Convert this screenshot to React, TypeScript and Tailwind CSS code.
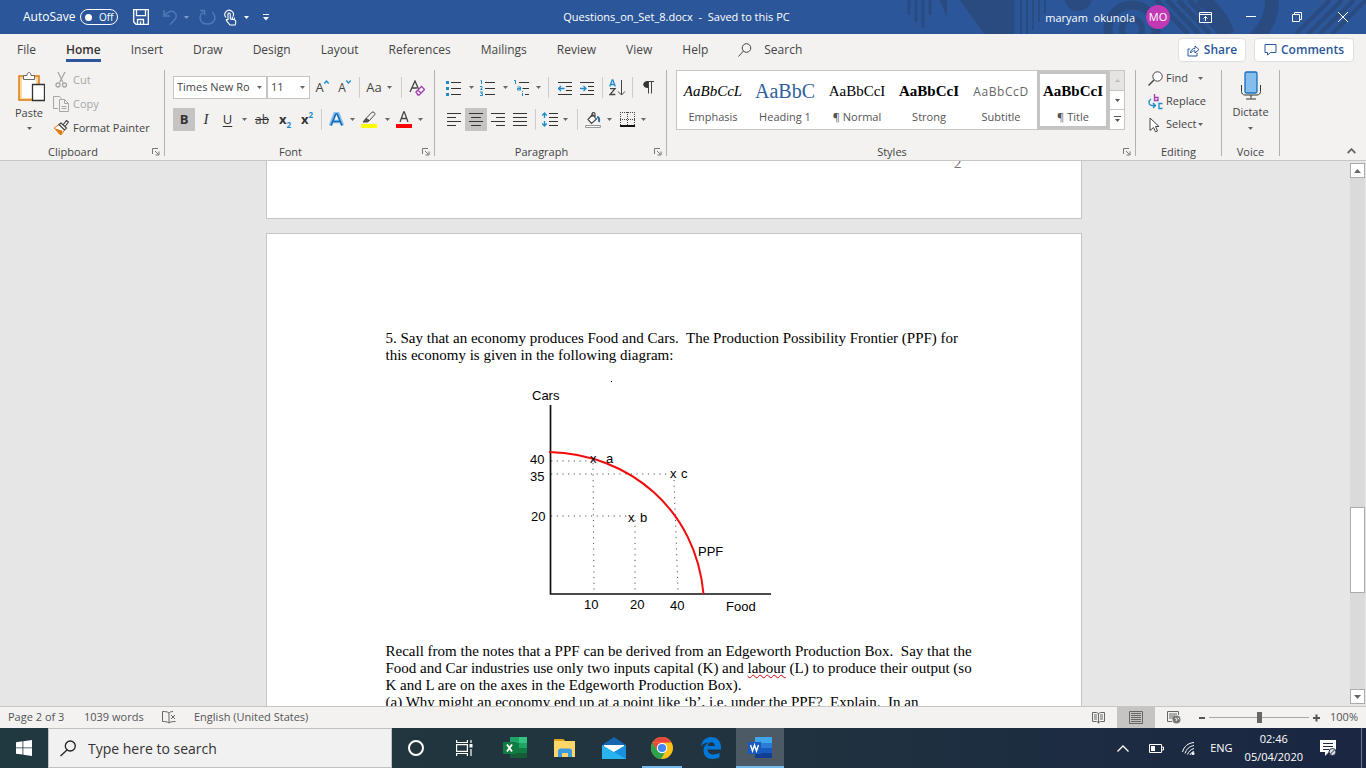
import React from "react";

const INK = "#444444";
const BLUE = "#1e8bcd";

function Caret({ w = "w-2", label, light = false }: { w?: string; label: string; light?: boolean }) {
  return (
    <button aria-label={label} className={`flex h-full shrink-0 items-center justify-center ${w}`}>
      <svg width="5" height="3" viewBox="0 0 5 3" aria-hidden="true">
        <path d="M0 0h5L2.500 3z" fill={light ? "#fff" : "#666"} />
      </svg>
    </button>
  );
}

function Tool({ label, w, on = false, children }: { label: string; w: string; on?: boolean; children: React.ReactNode }) {
  return (
    <button
      aria-label={label}
      title={label}
      className={`flex h-full shrink-0 items-center justify-center ${w} ${on ? "bg-[#c6c4c2]" : ""}`}
    >
      {children}
    </button>
  );
}

function Divider({ w }: { w: string }) {
  return (
    <div className={`flex h-full shrink-0 justify-center py-px ${w}`}>
      <div className="w-px bg-[#cfcdcb]" />
    </div>
  );
}

function Svg({ w = 16, h = 16, children }: { w?: number; h?: number; children: React.ReactNode }) {
  return (
    <svg width={w} height={h} viewBox={`0 0 ${w} ${h}`} fill="none" stroke={INK} aria-hidden="true" className="shrink-0">
      {children}
    </svg>
  );
}

function Group({ name, className, launcher = false, children }: { name: string; className: string; launcher?: boolean; children: React.ReactNode }) {
  return (
    <section aria-label={name} className={`flex shrink-0 flex-col ${className}`}>
      <div className="flex-1">{children}</div>
      <div className={`relative flex h-4 items-center justify-center text-[11px] ${launcher ? "pr-[18px]" : ""}`}>
        {name}
        {launcher && (
          <button aria-label={`${name} settings`} className="absolute right-1 top-1">
            <Svg w={8} h={8}>
              <path d="M.5 6V.5H6M3 3l3.500 3.500M7 3.500V7H3.500" stroke="#777" />
            </Svg>
          </button>
        )}
      </div>
    </section>
  );
}

function GroupLine() {
  return <div className="mb-1 mt-1 w-px shrink-0 self-stretch bg-[#b3b0ad]" />;
}

function Lines({ rows }: { rows: number[][] }) {
  return (
    <Svg w={14} h={14}>
      {rows.map(([a, b], i) => (
        <path key={i} d={`M${a} ${i * 4 + 0.5}H${b}`} stroke="#333" />
      ))}
    </Svg>
  );
}

function StyleCard({ name, sample, preview, on = false }: { name: string; sample: string; preview: string; on?: boolean }) {
  return (
    <button className={`flex w-[72px] shrink-0 flex-col items-center border-[3px] ${on ? "border-[#c6c4c2]" : "border-transparent"}`}>
      <span className={`h-[35px] shrink-0 whitespace-nowrap leading-[35px] ${preview}`}>{sample}</span>
      <span className="whitespace-nowrap text-[11px] leading-[15px] text-[#555]">{name}</span>
    </button>
  );
}

function TitleArt() {
  return (
    <svg className="absolute right-0 top-0 h-full" width="460" height="34" viewBox="906 0 460 34" fill="none" stroke="#2a4b80" aria-hidden="true">
      <g strokeWidth="3">
        <path d="M909 0v15M916 0v22M923 0v28M930 0v15" />
      </g>
      <path d="M940 0l7 18V0zM960 0l24 34h14V0z" fill="#2a4b80" stroke="none" />
      <path d="M1006 0v34" strokeWidth="17" />
      <path d="M1021 0v34M1027 0v34M1033 0v30M1039 0v22M1045 0v14" strokeWidth="2" />
      <circle cx="1078" cy="-3" r="14" fill="#2a4b80" stroke="none" />
      <circle cx="1132" cy="29" r="24" strokeWidth="9" />
      <circle cx="1132" cy="29" r="10" strokeWidth="6" />
      <path d="M1156 0l32 34M1167 0l32 34M1178 0l32 34M1189 0l32 34" strokeWidth="5" />
      <path d="M1272 0c0 16-7 30-19 40M1200-2c12 8 22 20 28 36" strokeWidth="14" />
      <path d="M1330 0l-34 34M1342 0l-34 34M1354 0l-34 34M1366 0l-34 34" strokeWidth="4" />
    </svg>
  );
}

function TitleBar() {
  return (
    <header className="relative flex h-[34px] shrink-0 items-center bg-[#2b579a] text-[11px] text-white">
      <TitleArt />
      <div className="relative flex h-full flex-1 items-center pl-[23px]">
        <span id="autosave" className="w-[57px] text-[12px]">AutoSave</span>
        <button role="switch" aria-checked="false" aria-labelledby="autosave" className="flex h-4 w-[38px] items-center gap-[7px] rounded-full border border-white pl-1 text-[10px]">
          <span className="size-[7px] rounded-full bg-white" />Off
        </button>
        <button aria-label="Save" className="ml-[15px]">
          <svg width="16" height="16" fill="none" stroke="#fff" strokeWidth="1.300"><path d="M.7.7h14.600v14.600H3L.7 13zM3.500.7v6h9v-6M4.500 15v-4.500h6V15M7.500 12.500V15" /></svg>
        </button>
        <button aria-label="Undo" className="ml-[14px]">
          <svg width="15" height="16" fill="none" stroke="#5279b5" strokeWidth="1.500"><path d="M1 1v6h6M1.500 6.500C5 2 9 1.500 11.500 3.500c3 2.500 2 5.500-.5 8L7 15.500" /></svg>
        </button>
        <div className="ml-1 opacity-40"><Caret light w="w-[9px]" label="Undo history" /></div>
        <button aria-label="Repeat" className="ml-2">
          <svg width="17" height="16" fill="none" stroke="#5279b5" strokeWidth="1.500"><path d="M4 3C-1 7 .5 15 8.500 15s9.500-8 4.500-12M1 1.500h4.500V6" /></svg>
        </button>
        <button aria-label="Touch mode" className="ml-2">
          <svg width="14" height="17" fill="none" stroke="#fff" strokeWidth="1.100"><path d="M2 8.500A4.300 4.300 0 1 1 9 7.500M4 11V5.200c0-1.700 2.300-1.700 2.300 0V10l4 .7c1.300.3 1.700 1 1.500 2.300l-.6 3H6l-3.500-4.300c-.7-1 .5-1.700 1.500-.7M8.300 10V7.800M10.300 10.500V8.500" /></svg>
        </button>
        <div className="ml-1 flex items-center"><Caret light w="w-[9px]" label="Touch mode options" /></div>
        <button aria-label="Customize toolbar" className="ml-3">
          <svg width="6" height="7"><path d="M0 .5h6" stroke="#fff" /><path d="M0 3h6L3 6.500z" fill="#fff" /></svg>
        </button>
      </div>
      <h1 className="relative whitespace-pre pr-9 text-[11px]">Questions_on_Set_8.docx  -  Saved to this PC</h1>
      <div className="relative flex h-full flex-1 items-center justify-end">
        <span className="whitespace-pre pr-[11px] pt-[2px] text-[11px]">maryam  okunola</span>
        <span className="mr-3 flex size-6 items-center justify-center rounded-full bg-[#c239b3] text-[11px]">MO</span>
        <button aria-label="Ribbon display options" className="flex w-[46px] justify-center"><svg width="13" height="11" fill="none" stroke="#fff"><path d="M.5.5h12v10H.5zM.5 2.500h12M6.500 9V4.500M4.500 6.500l2-2 2 2" /></svg></button>
        <button aria-label="Minimize" className="flex w-[46px] justify-center"><svg width="10" height="2"><path d="M0 .5h10" stroke="#fff" /></svg></button>
        <button aria-label="Restore" className="flex w-[46px] justify-center"><svg width="10" height="10" fill="none" stroke="#fff"><path d="M.5 2.500h7v7h-7zM2.500 2.500v-2h7v7h-2" /></svg></button>
        <button aria-label="Close" className="flex w-[46px] justify-center"><svg width="10" height="10" fill="none" stroke="#fff"><path d="M0 0l10 10M10 0L0 10" /></svg></button>
      </div>
    </header>
  );
}

const tabs = ["File", "Home", "Insert", "Draw", "Design", "Layout", "References", "Mailings", "Review", "View", "Help"];

function Tabs() {
  return (
    <nav className="flex h-8 shrink-0 items-center justify-between pl-[17px] pr-3 text-[12px]">
      <div className="flex h-full items-center gap-[30px]">
        {tabs.map((t) =>
          t === "Home" ? (
            <button key={t} className="relative h-full font-semibold text-[#333]">
              {t}
              <span className="absolute inset-x-0 bottom-1 h-[3px] bg-[#2b579a]" />
            </button>
          ) : (
            <button key={t}>{t}</button>
          )
        )}
        <button className="flex items-center gap-3">
          <Svg w={14} h={14}><circle cx="8.500" cy="5" r="4.300" /><path d="M5.500 8L.5 13.500" /></Svg>
          Search
        </button>
      </div>
      <div className="flex gap-2 font-semibold text-[#2b579a]">
        <button className="flex h-6 w-[68px] items-center justify-center gap-1 rounded-sm border border-[#e1dfdd] bg-white">
          <svg width="13" height="13" fill="none" stroke="#2b579a"><path d="M3 5H1v7h9V9M3.500 9c0-3 2-4.500 4.500-4.500V2L12 5.500 8 9V6.800C6 6.800 4.500 7.500 3.500 9z" /></svg>
          Share
        </button>
        <button className="flex h-6 w-[100px] items-center justify-center gap-1 rounded-sm border border-[#e1dfdd] bg-white">
          <svg width="13" height="12" fill="none" stroke="#2b579a"><path d="M1 .5h11v8H6.500L3.500 11V8.500H1z" /></svg>
          Comments
        </button>
      </div>
    </nav>
  );
}

function Clipboard() {
  return (
    <Group name="Clipboard" className="w-[164px]" launcher>
      <div className="flex">
        <button className="ml-[13px] flex w-8 flex-col items-center pt-[5px] text-[11px]">
          <svg width="28" height="31" fill="none" aria-hidden="true" className="ml-1">
            <path d="M2 5h20v24H2z" fill="#fbd79b" stroke="#e07a12" strokeWidth="1.500" />
            <path d="M5 8h14v19H5z" fill="#fff" />
            <path d="M6.500 8.500v-4h3.500c0-4 4-4 4 0h3.500v4z" fill="#fff" stroke="#666" />
            <path d="M15.500 13.500h12v16h-12z" fill="#fff" stroke="#333" strokeWidth="1.300" />
          </svg>
          <span className="mt-[3px] leading-[15px]">Paste</span>
          <svg className="mt-[7px]" width="5" height="3"><path d="M0 0h5L2.500 3z" fill="#666" /></svg>
        </button>
        <div className="flex flex-col pl-2 pt-[2px] text-[11px]">
          <button className="flex h-6 items-center gap-1 text-[#a6a6a6]">
            <Svg w={16} h={16}>
              <g stroke="#a6a6a6" strokeWidth="1.300"><path d="M5 0l5 10.500M12 0L6.500 10.500" /><circle cx="5" cy="13" r="2" /><circle cx="11.500" cy="13" r="2" /></g>
            </Svg>
            Cut
          </button>
          <button className="flex h-6 items-center gap-1 text-[#a6a6a6]">
            <Svg w={16} h={16}>
              <g stroke="#a6a6a6"><path d="M5 12.500H.5V.5h6l2 2M6.500 3.500h5l4 4v8h-9zM11.500 3.500v4h4M8.500 10.500h5M8.500 12.500h5" /></g>
            </Svg>
            Copy
          </button>
          <button className="flex h-6 items-center gap-1 whitespace-nowrap">
            <Svg w={16} h={16}>
              <path d="M1 8l5-3.500 5.500 5.500L8 15z" fill="#fff" stroke="#e07a12" />
              <path d="M2 9l7 2-1.500 4z" fill="#e07a12" stroke="#e07a12" />
              <path d="M6 4.500l2-1.500 5.500 5-2 2zM10 5l3.500-4.500L15.500 2 12 6.500" stroke="#444" fill="#fff" strokeWidth="1.200" />
            </Svg>
            Format Painter
          </button>
        </div>
      </div>
    </Group>
  );
}

function FontSelect({ label, value, w }: { label: string; value: string; w: string }) {
  return (
    <div className={`relative h-[23px] shrink-0 ${w}`}>
      <select aria-label={label} className="block h-[23px] w-full appearance-none border border-[#c6c4c2] bg-white pl-[3px] text-[11px] text-[#444]">
        <option>{value}</option>
      </select>
      <svg className="pointer-events-none absolute right-[5px] top-[10px]" width="5" height="3"><path d="M0 0h5L2.500 3z" fill="#666" /></svg>
    </div>
  );
}

function FontGroup() {
  return (
    <Group name="Font" className="w-[269px]" launcher>
      <div className="flex flex-col gap-[9px] pl-2 pt-[10px]">
        <div className="flex h-[23px] items-center">
          <FontSelect label="Font name" value="Times New Ro" w="w-[94px]" />
          <FontSelect label="Font size" value="11" w="w-[43px]" />
          <Tool label="Grow font" w="w-6">
            <span className="text-[13px]">A</span><svg className="mb-3" width="5" height="4" fill="none" stroke={BLUE}><path d="M.3 3.500L2.500 1l2.200 2.500" strokeWidth="1.300" /></svg>
          </Tool>
          <Tool label="Shrink font" w="w-[21px]">
            <span className="text-[12px]">A</span><svg className="mb-3" width="5" height="4" fill="none" stroke={BLUE}><path d="M.3.500L2.500 3 4.700.500" strokeWidth="1.300" /></svg>
          </Tool>
          <Divider w="w-2" />
          <Tool label="Change case" w="w-[22px]"><span className="text-[13px]">Aa</span></Tool>
          <Caret label="Case options" />
          <Divider w="w-4" />
          <Tool label="Clear formatting" w="w-4">
            <Svg><path d="M1 12L6 1l3.500 8M3 8h5" strokeWidth="1.300" /><path d="M7 12l5.500-5.500 3 3L10 15H9zM8.800 10l3.200 3" stroke="#a33eb0" strokeWidth="1.400" fill="#fff" /></Svg>
          </Tool>
        </div>
        <div className="flex h-[23px] items-center text-[#333]">
          <Tool label="Bold" w="w-[22px]" on><span className="text-[13px] font-bold">B</span></Tool>
          <Tool label="Italic" w="w-[22px]"><span className="font-['Liberation_Serif',serif] text-[15px] italic">I</span></Tool>
          <Tool label="Underline" w="w-[21px]"><span className="text-[13px] underline underline-offset-2">U</span></Tool>
          <Caret label="Underline options" w="w-[13px]" />
          <Tool label="Strikethrough" w="w-[22px]"><span className="text-[12px] line-through">ab</span></Tool>
          <Tool label="Subscript" w="w-6"><span className="text-[13px] font-bold">x</span><span className="mt-[10px] text-[8px] font-bold text-[#1e8bcd]">2</span></Tool>
          <Tool label="Superscript" w="w-5"><span className="text-[13px] font-bold">x</span><span className="mb-[10px] text-[8px] font-bold text-[#1e8bcd]">2</span></Tool>
          <Divider w="w-2" />
          <Tool label="Text effects" w="w-[23px]">
            <Svg w={15} h={15}><path d="M1.500 13.500L6 1.500h3l4.500 12M3.500 9.500h8" stroke="#8cc4ec" strokeWidth="3.500" /><path d="M2 13.500L6.700 2h1.600L13 13.500M4 9.500h7" stroke="#1a6dbb" strokeWidth="1.700" /></Svg>
          </Tool>
          <Caret label="Text effect options" />
          <Tool label="Highlight" w="w-[26px]">
            <Svg w={16} h={17}><path d="M0 13h16v4H0z" fill="#ff0" stroke="none" /><path d="M5 7.500L11 1.200c1-1 3.700.8 2.800 2.300L8.500 9.500H5z" /><path d="M5 7.500L2 11h4.500l2-1.500z" fill="#555" /></Svg>
          </Tool>
          <Caret label="Highlight colours" w="w-[10px]" />
          <Tool label="Font colour" w="w-6">
            <Svg w={16} h={17}><path d="M0 13h16v4H0z" fill="#f00" stroke="none" /><path d="M4 11L7.700.8h.6L12 11M5.500 7.500h5" strokeWidth="1.300" /></Svg>
          </Tool>
          <Caret label="Font colours" />
        </div>
      </div>
    </Group>
  );
}

function ParagraphGroup() {
  return (
    <Group name="Paragraph" className="w-[231px]" launcher>
      <div className="flex flex-col gap-[9px] pt-[10px]">
        <div className="flex h-[23px] pl-[7px]">
          <Tool label="Bullets" w="w-6">
            <Svg><path d="M0 1h3v3H0zM0 7h3v3H0zM0 13h3v3H0z" fill={BLUE} stroke="none" /><path d="M5 2.500h10M5 8.500h10M5 14.500h10" stroke="#333" /></Svg>
          </Tool>
          <Caret label="Bullet options" w="w-[10px]" />
          <Tool label="Numbering" w="w-6">
            <Svg><path d="M.5.500h1V4M0 6.500h2v1.300L.5 9.500h2M0 12h2.500L1 13.700h1.500v1.800H0" stroke={BLUE} /><path d="M5 2.500h10M5 8.500h10M5 14.500h10" stroke="#333" /></Svg>
          </Tool>
          <Caret label="Numbering options" w="w-[10px]" />
          <Tool label="Multilevel list" w="w-6">
            <Svg><path d="M0 .500h1.500V4M3.500 7h3v3h-3V8.500h3M8.500 11v1M8.500 13v3" stroke={BLUE} /><path d="M5 2.500h10M8.500 8.500H15M11 14.500h4" stroke="#333" /></Svg>
          </Tool>
          <Caret label="Multilevel options" />
          <Divider w="w-3" />
          <Tool label="Decrease indent" w="w-[22px]">
            <Svg w={14} h={14}><path d="M0 1.500h14M8 5.500h6M8 9.500h6M0 13.500h14" stroke="#333" /><path d="M6.500 7.500h-6M3 5L.5 7.500 3 10" stroke={BLUE} strokeWidth="1.300" /></Svg>
          </Tool>
          <Tool label="Increase indent" w="w-[22px]">
            <Svg w={14} h={14}><path d="M0 1.500h14M8 5.500h6M8 9.500h6M0 13.500h14" stroke="#333" /><path d="M0 7.500h6M3.500 5L6 7.500 3.500 10" stroke={BLUE} strokeWidth="1.300" /></Svg>
          </Tool>
          <Divider w="w-2" />
          <Tool label="Sort" w="w-[22px]">
            <Svg w={17} h={17}>
              <path d="M.7 7.500L3.200.8h.6l2.500 6.700M1.700 5.500h3.600" stroke={BLUE} strokeWidth="1.300" />
              <path d="M1 9.700h5L1 15.500h5.300" strokeWidth="1.300" />
              <path d="M12.500 1v15M9 12.500l3.500 3.500 3.500-3.500" />
            </Svg>
          </Tool>
          <Divider w="w-2" />
          <Tool label="Show formatting marks" w="w-6">
            <Svg w={11} h={13}><path d="M5.500.5v12M8.500.5v12M4 .5h7" /><path d="M5 0v7C-1.300 7-1.300 0 5 0z" fill="#333" stroke="none" /></Svg>
          </Tool>
        </div>
        <div className="flex h-[23px] pl-2">
          <Tool label="Align left" w="w-[22px]"><Lines rows={[[0, 14], [0, 9], [0, 14], [0, 9]]} /></Tool>
          <Tool label="Centre" w="w-[22px]" on><Lines rows={[[0, 14], [2, 12], [0, 14], [2, 12]]} /></Tool>
          <Tool label="Align right" w="w-[22px]"><Lines rows={[[0, 14], [5, 14], [0, 14], [5, 14]]} /></Tool>
          <Tool label="Justify" w="w-[22px]"><Lines rows={[[0, 14], [0, 14], [0, 14], [0, 14]]} /></Tool>
          <Divider w="w-2" />
          <Tool label="Line spacing" w="w-[22px]">
            <Svg w={16} h={15}><path d="M7 1.500h9M7 5.500h9M7 9.500h9M7 13.500h9" stroke="#333" /><path d="M2.500 1v5M.3 3.500L2.500 1l2.200 2.500M2.500 9v5M.3 11.500L2.500 14l2.200-2.500" stroke={BLUE} strokeWidth="1.300" /></Svg>
          </Tool>
          <Caret label="Spacing options" />
          <Divider w="w-4" />
          <Tool label="Shading" w="w-4">
            <Svg w={16} h={16}><path d="M.5 13.500h15v2H.5z" stroke="#999" fill="#fff" /><path d="M3 7.500l4.500-5 4 4.500-5 4.500zM7 5V1.500C8 0 10 .5 10 2v4" fill="#fff" strokeWidth="1.200" /><path d="M12 5c2 0 2.500 2 2 5" stroke="#2b6cb0" strokeWidth="2" /></Svg>
          </Tool>
          <Caret label="Shading colours" w="w-4" />
          <Tool label="Borders" w="w-5">
            <Svg w={15} h={15}><path d="M.5 0v13M14.500 0v13M7.500 0v13M0 .5h15M0 7.500h15" strokeDasharray="1 1" /><path d="M0 14h15" stroke="#111" strokeWidth="2" /></Svg>
          </Tool>
          <Caret label="Border options" w="w-3" />
        </div>
      </div>
    </Group>
  );
}

function StylesGroup() {
  return (
    <Group name="Styles" className="w-[468px]" launcher>
      <div className="ml-[9px] mr-[10px] mt-1 flex h-[60px] border border-[#c8c6c4] bg-white">
        <StyleCard name="Emphasis" sample="AaBbCcL" preview="font-['Liberation_Serif',serif] text-[15px] italic text-black" />
        <StyleCard name="Heading 1" sample="AaBbC" preview="font-['Liberation_Serif',serif] text-[20px] text-[#2f5f9e]" />
        <StyleCard name="¶ Normal" sample="AaBbCcI" preview="font-['Liberation_Serif',serif] text-[15px] text-black" />
        <StyleCard name="Strong" sample="AaBbCcI" preview="font-['Liberation_Serif',serif] text-[15px] font-bold text-black" />
        <StyleCard name="Subtitle" sample="AaBbCcD" preview="text-[12px] tracking-wider text-[#666]" />
        <StyleCard name="¶ Title" sample="AaBbCcI" preview="font-['Liberation_Serif',serif] text-[15px] font-bold text-black" on />
        <div className="flex flex-1 flex-col divide-y divide-[#c8c6c4] border-l border-[#c8c6c4]">
          <button aria-label="Scroll styles up" className="flex flex-1 items-center justify-center bg-[#e6e4e2]"><svg width="5" height="3"><path d="M0 3h5L2.500 0z" fill="#bbb" /></svg></button>
          <button aria-label="Scroll styles down" className="flex flex-1 items-center justify-center"><svg width="5" height="3"><path d="M0 0h5L2.500 3z" fill="#555" /></svg></button>
          <button aria-label="More styles" className="flex flex-1 items-center justify-center"><svg width="7" height="7"><path d="M0 .5h7" stroke="#555" /><path d="M1 3h5L3.500 6z" fill="#555" /></svg></button>
        </div>
      </div>
    </Group>
  );
}

function EditingGroup() {
  return (
    <Group name="Editing" className="w-[85px]">
      <div className="flex flex-col pl-3 pt-[1px] text-[11px]">
        <div className="flex h-[23px] items-center">
          <button className="flex items-center gap-[3px]">
            <Svg w={15} h={16}><circle cx="9.500" cy="5.500" r="4.700" fill="#fff" /><path d="M6 9L.5 14.500" strokeWidth="1.500" /></Svg>
            Find
          </button>
          <span className="ml-[9px] flex h-full"><Caret label="Find options" /></span>
        </div>
        <button className="flex h-[23px] items-center gap-[3px]">
          <Svg w={15} h={16}>
            <path d="M6.500 0v6.500h3.500V3.500H6.500" stroke="#a33eb0" strokeWidth="1.300" />
            <path d="M14.500 9.500H11v5h3.500" stroke={BLUE} strokeWidth="1.300" /><path d="M3 5C0 7 .5 11.500 4 11.500h3M5 9l2.500 2.500L5 14" stroke={BLUE} strokeWidth="1.300" />
          </Svg>
          Replace
        </button>
        <div className="flex h-[23px] items-center">
          <button className="flex items-center gap-[3px]">
            <Svg w={15} h={16}><path d="M2 1l9 8.500H7.500l2 4.500-2 .8-2-4.300L2 13.500z" fill="#fff" /></Svg>
            Select
          </button>
          <Caret label="Select options" />
        </div>
      </div>
    </Group>
  );
}

function Ribbon() {
  return (
    <div className="flex h-[95px] shrink-0 border-b border-[#c8c6c4] text-[#444]">
      <Clipboard />
      <GroupLine />
      <FontGroup />
      <GroupLine />
      <ParagraphGroup />
      <GroupLine />
      <StylesGroup />
      <GroupLine />
      <EditingGroup />
      <GroupLine />
      <Group name="Voice" className="w-[57px]">
        <button className="flex w-full flex-col items-center pt-[5px] text-[11px]">
          <Svg w={20} h={30}><path d="M.5 14v6.500c0 2 1.500 3.500 3.500 3.500h12c2 0 3.500-1.500 3.500-3.500V14M10 24v3.500M5 28h10" stroke="#333" /><rect x="4" y="1" width="12" height="21" rx="1.500" fill="#83beec" stroke="#1a6dbb" strokeWidth="1.300" /></Svg>
          <span className="mt-[3px] leading-[15px]">Dictate</span>
          <svg className="mt-2" width="5" height="3"><path d="M0 0h5L2.500 3z" fill="#666" /></svg>
        </button>
      </Group>
      <GroupLine />
      <div className="flex flex-1 items-end justify-end pb-1.5 pr-[10px]">
        <button aria-label="Collapse ribbon"><svg width="9" height="6" fill="none" stroke="#666" strokeWidth="1.800"><path d="M.7 5L4.500 1.200 8.300 5" /></svg></button>
      </div>
    </div>
  );
}

function Chart() {
  const labels: [string, number, number][] = [
    ["Cars", 532, 400], ["40", 530, 464], ["35", 530, 481], ["20", 531, 521], ["10", 584, 609], ["20", 630, 609],
    ["40", 670, 610], ["Food", 726, 611], ["PPF", 698, 556], ["x", 590, 463], ["a", 606, 463], ["x", 670, 478],
    ["c", 681, 478], ["x", 628, 522], ["b", 640, 522],
  ];
  return (
    <svg role="img" aria-label="Production Possibility Frontier" className="h-[279px] w-full" viewBox="386 364 576 279" fill="none">
      <path d="M551 461h42M551 474h120M551 516h77M593 463l1 127M635 520v70M674 480l4 110" stroke="#555" strokeDasharray="1.200 4.500" />
      <path d="M550.500 405v189H771" stroke="#111" strokeWidth="1.700" />
      <path d="M549 452C630 454 696 510 703.500 594" stroke="#f20a0a" strokeWidth="2" />
      <circle cx="611.500" cy="381.500" r="0.700" fill="#000" />
      <g className="fill-black font-['Liberation_Sans',Arial,sans-serif] text-[13px]">
        {labels.map(([t, x, y], i) => (
          <text key={i} x={x} y={y}>{t}</text>
        ))}
      </g>
    </svg>
  );
}

function Workspace() {
  return (
    <div className="flex min-h-0 flex-1 overflow-hidden bg-[#e6e6e6]">
      <main className="flex min-w-0 flex-1 flex-col items-center gap-[14px] overflow-hidden font-['Liberation_Serif',serif] text-[15px] leading-[17px] text-black">
        <div className="h-[58px] w-[816px] shrink-0 border border-t-0 border-[#c6c6c6] bg-white px-[119px] text-right text-[#777]">
          <span className="-mt-[6px] block">2</span>
        </div>
        <article className="w-[816px] shrink-0 whitespace-pre border border-[#c6c6c6] bg-white px-[119px] pb-24 pt-24">
          <p>5. Say that an economy produces Food and Cars.  The Production Possibility Frontier (PPF) for{"\n"}this economy is given in the following diagram:</p>
          <Chart />
          <p>Recall from the notes that a PPF can be derived from an Edgeworth Production Box.  Say that the{"\n"}Food and Car industries use only two inputs capital (K) and <span className="underline decoration-red-600 decoration-wavy decoration-1">labour</span> (L) to produce their output (so{"\n"}K and L are on the axes in the Edgeworth Production Box).</p>
          <p>(a) Why might an economy end up at a point like ‘b’, i.e. under the PPF?  Explain.  In an</p>
        </article>
      </main>
      <div className="flex w-[19px] shrink-0 flex-col py-[2px] pl-[3px] pr-px">
        <button aria-label="Scroll up" className="flex h-[15px] items-center justify-center border border-[#ababab] bg-white"><svg width="7" height="4"><path d="M0 4h7L3.500 0z" fill="#666" /></svg></button>
        <div className="flex flex-1 flex-col bg-[#dadada]">
          <div className="flex-[330]" />
          <div className="h-[86px] border border-[#ababab] bg-white" />
          <div className="flex-[96]" />
        </div>
        <button aria-label="Scroll down" className="flex h-[15px] items-center justify-center border border-[#ababab] bg-white"><svg width="7" height="4"><path d="M0 0h7L3.500 4z" fill="#666" /></svg></button>
      </div>
    </div>
  );
}

function StatusBar() {
  return (
    <footer className="flex h-[22px] shrink-0 items-center justify-between border-t border-[#c8c6c4] pl-2 pr-2 text-[11px] text-[#555]">
      <div className="flex items-center">
        <span className="w-[76px]">Page 2 of 3</span>
        <span className="w-[78px]">1039 words</span>
        <button aria-label="Proofing" className="w-8"><Svg w={15} h={13}><path d="M7 2C5 .500 3 .500.500.500v10c2.500 0 4.500 0 6.500 1.500C8 11 10 10.500 13.500 10.500M7 2v10M7 2c1-1 2-1.500 4-1.500M9 4l4 4M13 4L9 8" stroke="#666" /></Svg></button>
        <span>English (United States)</span>
      </div>
      <div className="flex h-full items-center">
        <button aria-label="Read mode" className="flex h-full w-[38px] items-center justify-center">
          <Svg w={13} h={12}><path d="M6.500 1.500v10M.5.500h4l2 1 2-1h4v9h-4l-2 1-2-1h-4zM2 3h3M2 5h3M2 7h3M8 3h3M8 5h3M8 7h3" stroke="#666" /></Svg>
        </button>
        <button aria-label="Print layout" className="flex h-full w-[38px] items-center justify-center bg-[#c6c4c2]">
          <Svg w={14} h={13}><path d="M.5.500h13v12H.5zM2 2.500h10M2 4.500h10M2 6.500h10M2 8.500h10M2 10.500h10" stroke="#666" /></Svg>
        </button>
        <button aria-label="Web layout" className="flex h-full w-[38px] items-center justify-center">
          <Svg w={14} h={13}><path d="M5 10.500H.5v-10h11V4M2 3h8M2 5h6M2 7h4" stroke="#666" /><circle cx="9.500" cy="8.500" r="4" fill="#777" stroke="none" /><path d="M8 7l2 1-1 2M11 6.500l1 2" stroke="#f3f2f1" /></Svg>
        </button>
        <button aria-label="Zoom out" className="ml-1 w-3"><svg width="6" height="2" className="ml-[2px]"><path d="M0 0h6v2H0z" fill="#555" /></svg></button>
        <input
          type="range"
          aria-label="Zoom"
          defaultValue={50}
          className="h-[11px] w-[100px] appearance-none bg-transparent bg-[linear-gradient(#a6a6a6,#a6a6a6)] bg-[length:100%_1px] bg-center bg-no-repeat [&::-webkit-slider-thumb]:h-[11px] [&::-webkit-slider-thumb]:w-[5px] [&::-webkit-slider-thumb]:appearance-none [&::-webkit-slider-thumb]:bg-[#666]"
        />
        <button aria-label="Zoom in" className="ml-1"><svg width="7" height="8"><path d="M0 3h7v2H0zM2.500.500h2v7h-2z" fill="#555" /></svg></button>
        <span className="ml-[10px]">100%</span>
      </div>
    </footer>
  );
}

function TaskButton({ label, children, state }: { label: string; children: React.ReactNode; state: string }) {
  return (
    <button aria-label={label} className={`flex h-full shrink-0 items-center justify-center ${state}`}>
      {children}
    </button>
  );
}

function Taskbar() {
  return (
    <div className="flex h-10 shrink-0 items-center bg-linear-to-r from-[#20383f] via-[#21343f] to-[#1a2642] text-white">
      <button aria-label="Start" className="flex h-full w-12 items-center justify-center">
        <svg width="16" height="16" fill="#fff"><path d="M0 2.200l6.500-.9v6.200H0zM7.300 1.200L16 0v7.500H7.300zM0 8.300h6.500v6.300L0 13.700zM7.300 8.300H16V16l-8.700-1.200z" /></svg>
      </button>
      <label className="flex h-full w-[344px] items-center gap-3 border border-[#c0c0c0] bg-[#f1f1f1] pl-[11px]">
        <svg width="16" height="17" fill="none" stroke="#222" strokeWidth="1.300"><circle cx="10.300" cy="6" r="5" /><path d="M7 10L.5 16" /></svg>
        <input aria-label="Search" placeholder="Type here to search" className="w-60 bg-transparent text-[14px] text-black placeholder:text-[#333]" />
      </label>
      <TaskButton label="Cortana" state="w-12"><svg width="18" height="18" fill="none" stroke="#fff" strokeWidth="2"><circle cx="9" cy="9" r="7" /></svg></TaskButton>
      <TaskButton label="Task view" state="w-12"><svg width="17" height="16" fill="none" stroke="#fff" strokeWidth="1.200"><path d="M.6 0v2.500h10.800V0M.6 16v-2.500h10.800V16M.6 4.600h10.800v6.800H.6zM15 0v3M15 9v7" /><path d="M13.500 4h3v3.500h-3z" fill="#fff" stroke="none" /></svg></TaskButton>
      <TaskButton label="Excel" state="w-[54px]">
        <svg width="25" height="22"><path d="M7 0h9v7H7z" fill="#21a366" /><path d="M16 0h8v6h-8z" fill="#33c481" /><path d="M7 6h9v10H7z" fill="#107c41" /><path d="M16 6h8v5h-8z" fill="#21a366" /><path d="M16 11h8v5h-8z" fill="#107c41" /><path d="M7 16h17v5H7z" fill="#185c37" /><path d="M0 5h13v12H0z" fill="#107c41" /><path d="M4 7.500l5 7M9 7.500l-5 7" stroke="#fff" strokeWidth="1.800" /></svg>
      </TaskButton>
      <TaskButton label="File Explorer" state="w-[46px]">
        <svg width="22" height="20"><path d="M0 1h9l2 2h10v16H0z" fill="#ffd667" /><path d="M0 1h9l1.500 2H0z" fill="#e0a11b" /><path d="M4 19v-7l2-1.500h10l2 1.500v7h-4v-4H8v4z" fill="#3d9be0" /></svg>
      </TaskButton>
      <TaskButton label="Mail" state="w-[52px]">
        <svg width="24" height="23"><path d="M0 8L12 0l12 8v14H0z" fill="#1565b3" /><path d="M2 8h20v8H2z" fill="#fff" /><path d="M0 8l12 7 12-7v14H0z" fill="#28b4f0" /><path d="M12 15l12-7v14z" fill="#1a8fe0" /></svg>
      </TaskButton>
      <TaskButton label="Chrome" state="ml-[2px] w-10 border-b-2 border-t-2 border-t-transparent border-[#76b9ed]">
        <svg width="22" height="22" viewBox="0 0 22 22"><circle cx="11" cy="11" r="11" fill="#fbc116" /><path d="M1.500 5.500A11 11 0 0 1 20.500 5.500H11z" fill="#e8453c" /><path d="M1.500 5.500A11 11 0 0 0 10 22l5-8.500L11 16 6 13z" fill="#2ba24c" /><path d="M1.500 5.500h19L11 6l-5 7z" fill="#e8453c" /><circle cx="11" cy="11" r="5.200" fill="#fff" /><circle cx="11" cy="11" r="4.100" fill="#4285f4" /></svg>
      </TaskButton>
      <TaskButton label="Edge" state="ml-1 w-[50px]">
        <svg width="20" height="22"><path d="M0 9.500C1 3.500 5 0 10.300 0 16 0 20 4 20 10v2.500H6.500c.2 3.500 3 5 6 5 2.300 0 4.300-.7 6-1.700v4.500C16.500 21.500 14.300 22 12 22 6 22 2.500 18.500 2.500 13.500 2.500 10 4.500 7 8 5.500 4.500 5.500 1.700 7 0 9.500zM6.600 9h7.200c0-2.500-1.300-3.800-3.300-3.800C8.500 5.200 7 6.700 6.600 9z" fill="#0078d7" /></svg>
      </TaskButton>
      <TaskButton label="Word" state="w-12 border-b-2 border-t-2 border-t-transparent border-[#76b9ed] bg-[#4c5a66]">
        <svg width="24" height="22"><path d="M7 0h17v6H7z" fill="#41a5ee" /><path d="M7 6h17v5H7z" fill="#2b7cd3" /><path d="M7 11h17v5H7z" fill="#185abd" /><path d="M7 16h17v5H7z" fill="#103f91" /><path d="M0 5h13v12H0z" fill="#185abd" /><path d="M2.500 8l2 6 2-6 2 6 2-6" fill="none" stroke="#fff" strokeWidth="1.400" /></svg>
      </TaskButton>
      <div className="ml-auto flex h-full items-center text-[11px]">
        <button aria-label="Hidden icons" className="mr-5"><svg width="12" height="7" fill="none" stroke="#fff" strokeWidth="1.300"><path d="M.5 6.500L6 1l5.500 5.500" /></svg></button>
        <button aria-label="Battery" className="mr-[18px]"><svg width="15" height="9" fill="none" stroke="#fff"><path d="M.5.500h12v8H.5zM13 3h1.500v3H13" /><path d="M2 2h4v5H2z" fill="#fff" stroke="none" /></svg></button>
        <button aria-label="Network" className="mr-[15px]"><svg width="13" height="13" fill="none" stroke="#fff"><path d="M.5 10C2 4.500 6 1 12 .5M3 11.500C4.500 7 7 4.500 12 3.500M5.500 12.500C6.500 9.500 8.500 7.500 12 6.500M8 13c.8-2 2-3 4-3.500" /><circle cx="11" cy="11.500" r="1.500" fill="#fff" stroke="none" /></svg></button>
        <button className="mr-3">ENG</button>
        <button className="mr-[17px] text-center leading-[18px]">02:46<br />05/04/2020</button>
        <button aria-label="Notifications" className="mr-6"><svg width="17" height="17"><path d="M0 0h16v12H9l-4 4v-4H0z" fill="#fff" /><path d="M3 3.500h10M3 6.500h10M3 9.500h6" stroke="#1b2945" /><circle cx="12.500" cy="12" r="3.500" fill="#ddd" stroke="#1b2945" /><path d="M10.500 14l4-4" stroke="#1b2945" /></svg></button>
        <div className="mr-1 h-full w-px bg-[#6d7588]" />
      </div>
    </div>
  );
}

export default function App() {
  return (
    <div className="flex h-screen flex-col overflow-hidden bg-[#f3f2f1] font-['Open_Sans',sans-serif] text-[#444]">
      <TitleBar />
      <Tabs />
      <Ribbon />
      <Workspace />
      <StatusBar />
      <Taskbar />
    </div>
  );
}
